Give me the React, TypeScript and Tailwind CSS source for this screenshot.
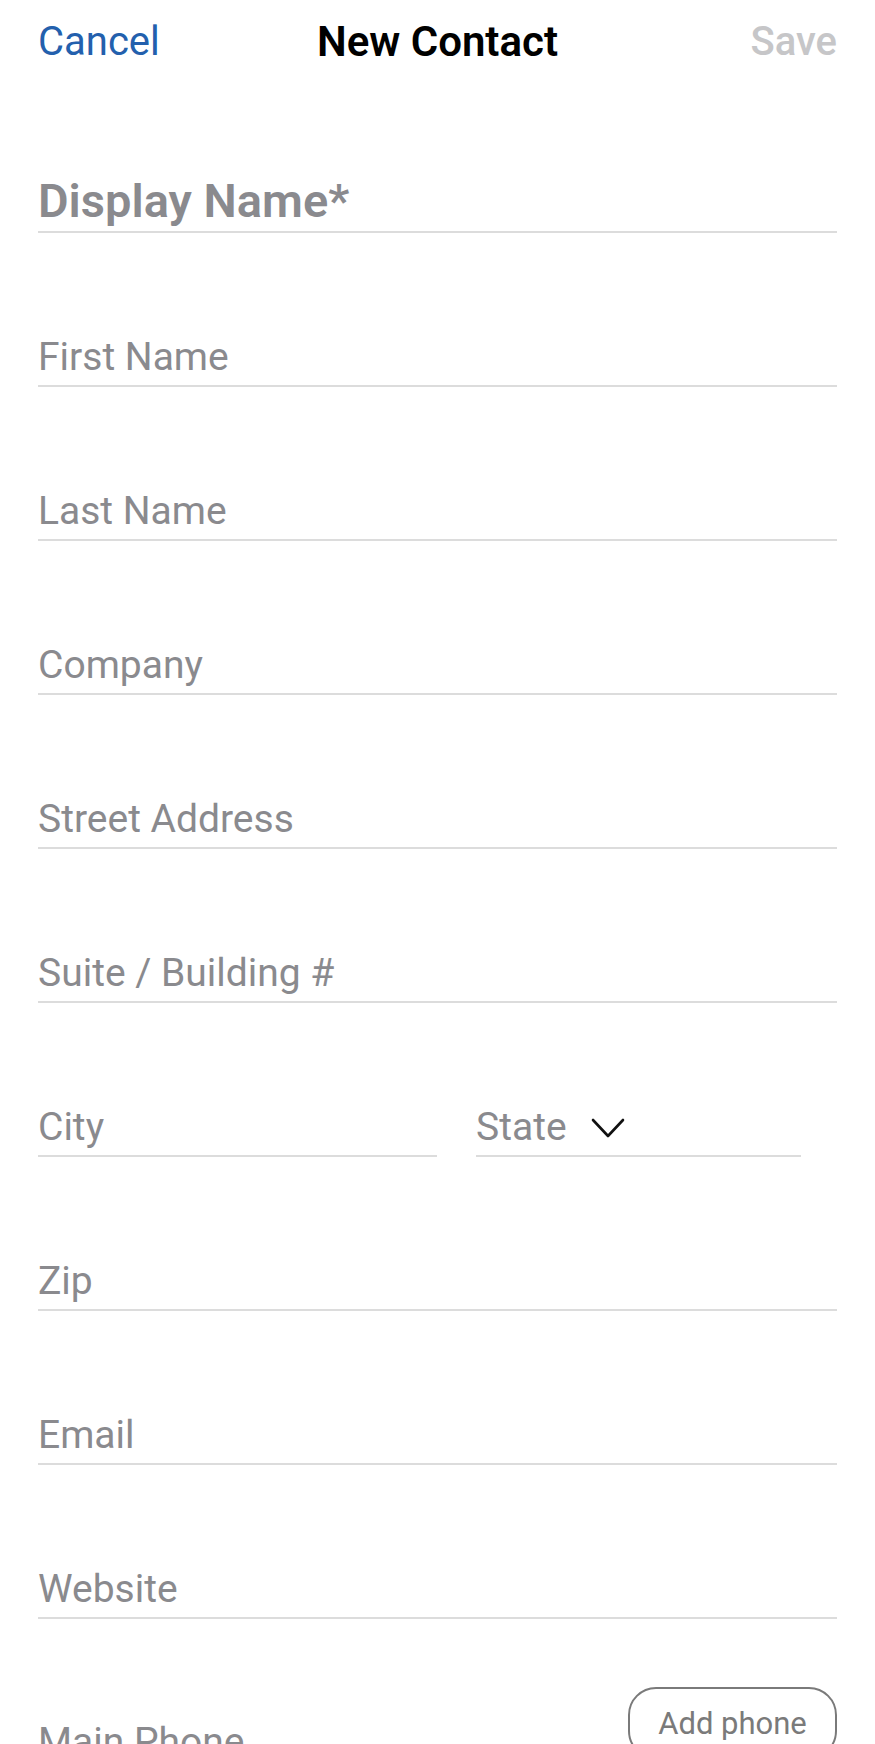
import type { ReactNode } from "react";

const font = { fontFamily: "Roboto, 'Liberation Sans', sans-serif" };

function Field({ label, className = "" }: { label: ReactNode; className?: string }) {
  return (
    <div className={`border-b-2 border-[#dcdcdc] pb-[8px] ${className}`}>
      <div className="text-[39px] leading-none text-[#8a8a8e]">{label}</div>
    </div>
  );
}

export default function App() {
  const fields = ["First Name", "Last Name", "Company", "Street Address", "Suite / Building #"];
  const after = ["Zip", "Email", "Website"];

  return (
    <div className="h-[1744px] overflow-hidden bg-white px-[38px]" style={font}>
      {/* header */}
      <div className="grid h-[84px] grid-cols-[1fr_auto_1fr] items-center">
        <button className="justify-self-start text-[40px] leading-none text-[#2360ad]">Cancel</button>
        <div className="text-[42px] font-semibold leading-none text-black">New Contact</div>
        <button className="justify-self-end text-[40px] font-medium leading-none text-[#c6c6c8]">Save</button>
      </div>

      <div className="mt-[93px] border-b-2 border-[#dcdcdc] pb-[7px]">
        <div className="text-[47px] font-semibold leading-none text-[#8a8a8e]">Display Name*</div>
      </div>

      <div className="mt-[105px] flex flex-col gap-[105px]">
        {fields.map((f) => (
          <Field key={f} label={f} />
        ))}

        <div className="flex gap-[39px]">
          <Field label="City" className="w-[399px]" />
          <div className="w-[325px] border-b-2 border-[#dcdcdc] pb-[8px]">
            <div className="flex items-center gap-[24px] text-[39px] leading-none text-[#8a8a8e]">
              State
              <svg width="34" height="24" viewBox="0 0 34 24" fill="none">
                <path d="M2 4 L17 20 L32 4" stroke="#111" strokeWidth="2.6" strokeLinecap="round" strokeLinejoin="round" />
              </svg>
            </div>
          </div>
        </div>

        {after.map((f) => (
          <Field key={f} label={f} />
        ))}
      </div>

      {/* phone row */}
      <div className="mt-[68px] flex items-start justify-between">
        <div className="pt-[36px] text-[39px] leading-none text-[#8a8a8e]">Main Phone</div>
        <button className="flex h-[72px] w-[209px] items-center justify-center rounded-[28px] border-2 border-[#7a7a7a] text-[31px] leading-none text-[#7a7a7a]">
          Add phone
        </button>
      </div>
    </div>
  );
}
